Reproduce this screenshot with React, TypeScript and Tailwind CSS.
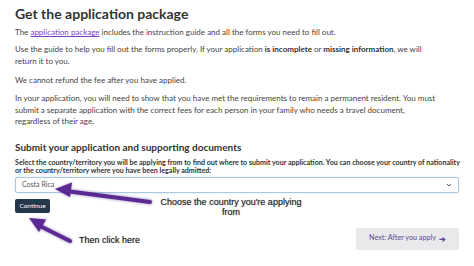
import React from "react";

export default function App() {
  return (
    <div className="relative w-[474px] h-[266px] bg-white overflow-hidden" style={{ fontFamily: "Lato, 'Noto Sans', sans-serif" }}>
      <div className="w-[446px] ml-[15px] text-[#444]">
        <h1 className="mt-[4px] text-[14px] leading-[20px] font-bold text-[#333]">Get the application package</h1>
        <p className="mt-[2px] text-[8px] leading-[12px]">
          The <span className="text-[#7b3fc0] underline">application package</span> includes the instruction guide and all the forms you need to fill out.
        </p>
        <p className="mt-[5px] text-[8px] leading-[12px]">
          Use the guide to help you fill out the forms properly. If your application <span className="font-bold text-[#333]">is incomplete</span> or <span className="font-bold text-[#333]">missing information</span>, we will
          <br />
          return it to you.
        </p>
        <p className="mt-[7px] text-[8px] leading-[12px]">We cannot refund the fee after you have applied.</p>
        <p className="mt-[7px] text-[8px] leading-[11.5px]">
          In your application, you will need to show that you have met the requirements to remain a permanent resident. You must
          <br />
          submit a separate application with the correct fees for each person in your family who needs a travel document,
          <br />
          regardless of their age.
        </p>
        <h2 className="mt-[12px] text-[10px] leading-[14px] font-bold text-[#333]">Submit your application and supporting documents</h2>
        <p className="mt-[5px] text-[7.1px] leading-[8.5px] font-bold text-[#333]">
          Select the country/territory you will be applying from to find out where to submit your application. You can choose your country of nationality
          <br />
          or the country/territory where you have been legally admitted:
        </p>
        <div className="mt-[1px] h-[16px] w-[444px] border border-[#a9c8e4] rounded-[2px] flex items-center justify-between px-[6px] shadow-[0_0_2px_#cfe0f0]">
          <span className="text-[7px] text-[#555]">Costa Rica</span>
          <svg width="6" height="4" viewBox="0 0 6 4"><path d="M1 1 L3 3 L5 1" fill="none" stroke="#555" strokeWidth="1" /></svg>
        </div>
        <div className="mt-[6px] h-[14px] w-[35px] bg-[#26374a] rounded-[2px] flex items-center justify-center">
          <span className="text-[6.5px] text-white">Continue</span>
        </div>
        <div className="mt-[15px] flex justify-end pr-[2px]">
          <div className="h-[22px] w-[103px] bg-[#e9e9ec] rounded-[2px] flex items-center justify-center gap-[3px] text-[#5b4a91] text-[7.2px]">
            <span>Next: After you apply</span>
            <span className="font-bold text-[8px]">➔</span>
          </div>
        </div>
      </div>

      <svg className="absolute left-0 top-0" width="474" height="266" viewBox="0 0 474 266">
        <defs>
          <filter id="glow" x="-20%" y="-20%" width="140%" height="140%">
            <feGaussianBlur stdDeviation="1" />
          </filter>
        </defs>
        <g filter="url(#glow)" opacity="0.5">
          <line x1="150" y1="202" x2="66" y2="191" stroke="#7a5aa8" strokeWidth="5.5" strokeLinecap="round" />
          <polygon points="55,189 72,182 70,198" fill="#7a5aa8" />
          <line x1="70" y1="241" x2="38" y2="225" stroke="#7a5aa8" strokeWidth="5.5" strokeLinecap="round" />
          <polygon points="29,218 47,219 39,233" fill="#7a5aa8" />
        </g>
        <line x1="150" y1="202" x2="66" y2="191" stroke="#5a2a92" strokeWidth="4" strokeLinecap="round" />
        <polygon points="55,189 72,182.5 70,197" fill="#5a2a92" />
        <line x1="70" y1="241" x2="38" y2="225" stroke="#5a2a92" strokeWidth="4" strokeLinecap="round" />
        <polygon points="29,218 46,219.5 39,232" fill="#5a2a92" />
      </svg>

      <div className="absolute left-[150px] top-[197px] w-[162px] text-center text-[9px] leading-[10px] text-[#222] [text-shadow:0_0_1px_#888]" style={{ fontFamily: "'Liberation Sans', Arial, sans-serif" }}>
        Choose the country you're applying<br />from
      </div>
      <div className="absolute left-[79px] top-[235px] text-[9px] leading-[11px] text-[#222] [text-shadow:0_0_1px_#888]" style={{ fontFamily: "'Liberation Sans', Arial, sans-serif" }}>
        Then click here
      </div>
    </div>
  );
}
